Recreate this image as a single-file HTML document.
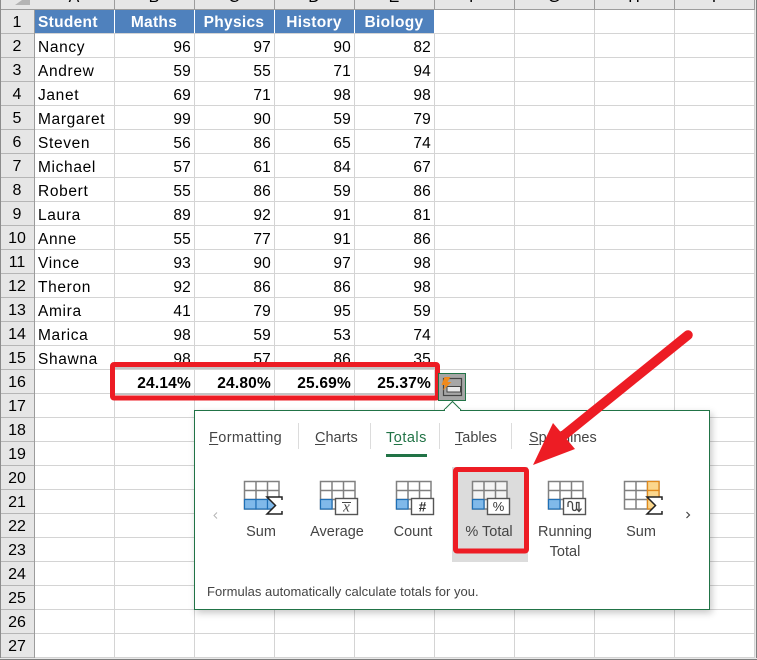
<!DOCTYPE html>
<html><head><meta charset="utf-8"><style>
html,body{margin:0;padding:0;background:#fff}
#p{position:relative;width:757px;height:660px;overflow:hidden;background:#fff;font-family:"Liberation Sans",sans-serif;color:#000}
#bg{position:absolute;left:35px;top:10px;width:720px;height:648px;
background-image:repeating-linear-gradient(to right,transparent 0,transparent 79px,#d4d4d4 79px,#d4d4d4 80px),repeating-linear-gradient(to bottom,transparent 0,transparent 23px,#d4d4d4 23px,#d4d4d4 24px)}
#g{position:absolute;left:35px;top:10px;display:grid;grid-template-columns:repeat(5,80px);grid-auto-rows:24px;font-size:15.5px;line-height:27px;letter-spacing:.2px}
#g div{padding:0 4px 0 3px;white-space:nowrap;box-sizing:border-box;text-align:right;height:24px}
#g .l{text-align:left;letter-spacing:.65px}
#g .h{background:#4f81bd;color:#fff;font-weight:bold;text-align:center;height:23px;line-height:26px;border-right:1px solid #fff;width:80px;letter-spacing:.3px}
#g .h.l{text-align:left}
#g .b{font-weight:bold}
#rh{position:absolute;left:0;top:10px;width:34px;height:648px;background:#e6e6e6;background-image:repeating-linear-gradient(to bottom,transparent 0,transparent 23px,#b5b5b5 23px,#b5b5b5 24px);border-right:1px solid #9c9c9c;font-size:16px;line-height:26px;text-align:center}
#rh div{height:24px}
#ch{position:absolute;left:0;top:0;width:757px;height:9px;background:#e6e6e6;overflow:hidden;font-size:16px}
#ch span{position:absolute;top:-11px;width:80px;text-align:center;line-height:18px;border-right:1px solid #9c9c9c;height:22px}
#line1{position:absolute;left:0;top:9px;width:757px;height:1px;background:#9c9c9c}
#lb{position:absolute;left:0;top:0;width:1px;height:660px;background:#8c8c8c}
#rb{position:absolute;left:755px;top:0;width:2px;height:660px;background:linear-gradient(to right,#e8e8e8 50%,#7f7f7f 50%)}
#bb{position:absolute;left:0;top:658px;width:757px;height:2px;background:linear-gradient(to bottom,#e8e8e8 50%,#7f7f7f 50%)}
#pop{position:absolute;left:194px;top:410px;width:514px;height:198px;background:#fff;border:1px solid #217346;box-shadow:2px 3px 7px rgba(0,0,0,.22)}
.t{position:absolute;top:429px;font-size:14.5px;line-height:18px;color:#444;white-space:nowrap}
.t u{text-underline-offset:2px}
.lab{position:absolute;width:76px;text-align:center;font-size:14.5px;line-height:20px;color:#444}
#foot{position:absolute;left:207px;top:584px;font-size:13px;line-height:16px;color:#444;white-space:nowrap;letter-spacing:.03px}
svg{position:absolute;left:0;top:0}
</style></head><body><div id="p">
<div id="bg"></div>
<div id="ch"><span style="left:34px">A</span><span style="left:114px">B</span><span style="left:194px">C</span><span style="left:274px">D</span><span style="left:354px">E</span><span style="left:434px">F</span><span style="left:514px">G</span><span style="left:594px">H</span><span style="left:674px">I</span></div>
<div id="line1"></div>
<div id="rh"><div>1</div><div>2</div><div>3</div><div>4</div><div>5</div><div>6</div><div>7</div><div>8</div><div>9</div><div>10</div><div>11</div><div>12</div><div>13</div><div>14</div><div>15</div><div>16</div><div>17</div><div>18</div><div>19</div><div>20</div><div>21</div><div>22</div><div>23</div><div>24</div><div>25</div><div>26</div><div>27</div></div>
<div id="g">
<div class="h l">Student</div><div class="h">Maths</div><div class="h">Physics</div><div class="h">History</div><div class="h">Biology</div>
<div class="l">Nancy</div><div>96</div><div>97</div><div>90</div><div>82</div>
<div class="l">Andrew</div><div>59</div><div>55</div><div>71</div><div>94</div>
<div class="l">Janet</div><div>69</div><div>71</div><div>98</div><div>98</div>
<div class="l">Margaret</div><div>99</div><div>90</div><div>59</div><div>79</div>
<div class="l">Steven</div><div>56</div><div>86</div><div>65</div><div>74</div>
<div class="l">Michael</div><div>57</div><div>61</div><div>84</div><div>67</div>
<div class="l">Robert</div><div>55</div><div>86</div><div>59</div><div>86</div>
<div class="l">Laura</div><div>89</div><div>92</div><div>91</div><div>81</div>
<div class="l">Anne</div><div>55</div><div>77</div><div>91</div><div>86</div>
<div class="l">Vince</div><div>93</div><div>90</div><div>97</div><div>98</div>
<div class="l">Theron</div><div>92</div><div>86</div><div>86</div><div>98</div>
<div class="l">Amira</div><div>41</div><div>79</div><div>95</div><div>59</div>
<div class="l">Marica</div><div>98</div><div>59</div><div>53</div><div>74</div>
<div class="l">Shawna</div><div>98</div><div>57</div><div>86</div><div>35</div>
<div></div><div class="b">24.14%</div><div class="b">24.80%</div><div class="b">25.69%</div><div class="b">25.37%</div>
</div>
<div id="lb"></div><div id="rb"></div><div id="bb"></div>
<div id="pop"></div>
<div style="position:absolute;left:452px;top:467px;width:76px;height:95px;background:#dcdcdc"></div>
<div class="t" style="left:209px;letter-spacing:.38px"><u>F</u>ormatting</div>
<div class="t" style="left:315px"><u>C</u>harts</div>
<div class="t" style="left:386px;color:#217346;letter-spacing:.5px">T<u>o</u>tals</div>
<div class="t" style="left:455px"><u>T</u>ables</div>
<div class="t" style="left:529px"><u>S</u>parklines</div>
<div class="lab" style="left:223px;top:522px">Sum</div>
<div class="lab" style="left:299px;top:522px">Average</div>
<div class="lab" style="left:375px;top:522px">Count</div>
<div class="lab" style="left:451px;top:522px">% Total</div>
<div class="lab" style="left:527px;top:522px">Running<br>Total</div>
<div class="lab" style="left:603px;top:522px">Sum</div>
<div id="foot">Formulas automatically calculate totals for you.</div>
<svg width="757" height="660" viewBox="0 0 757 660">
<polygon points="15,5 30,5 30,0 22,0" fill="#b4b4b4"/>
<rect x="114" y="368" width="322" height="26" fill="none" stroke="#c4c4c4" stroke-width="2"/>
<rect x="112.500" y="364.500" width="325" height="33.500" rx="1.500" fill="none" stroke="#ed1c24" stroke-width="5"/>
<rect x="438.500" y="373.500" width="27" height="27" fill="#a6a6a6" stroke="#217346"/>
<rect x="443.500" y="378.500" width="18" height="17" fill="none" stroke="#444" stroke-width="1.200"/>
<rect x="447" y="386.500" width="13.500" height="5.500" fill="#e8e8e8" stroke="#444"/>
<polygon points="450.500,377 444.500,377 441.500,385 445,385 443,390.500 451.500,382 447.500,382" fill="#f08a1d"/>
<path d="M444 410L452.500 401.500L461 410" fill="#fff" stroke="#217346"/>
<rect x="445" y="409" width="15" height="2" fill="#fff"/>
<path d="M298.500 423V449M370.500 423V449M439.500 423V449M511.500 423V449" stroke="#dcdcdc"/>
<rect x="386" y="454" width="41" height="3" fill="#217346"/>
<path d="M217 512.500L214 515.500L217 518.500" fill="none" stroke="#b5b5b5"/>
<path d="M686.500 512L689.500 515L686.500 518" fill="none" stroke="#444" stroke-width="1.200"/>

<g fill="#fff" stroke="#808080" stroke-width="1.500">
<path d="M244.500 481.500H279V509H244.500ZM256 481.500V509M267.500 481.500V509M244.500 490.500H279M244.500 499.500H279"/>
<path d="M320.500 481.500H355V509H320.500ZM332 481.500V509M343.500 481.500V509M320.500 490.500H355M320.500 499.500H355"/>
<path d="M396.500 481.500H431V509H396.500ZM408 481.500V509M419.500 481.500V509M396.500 490.500H431M396.500 499.500H431"/>
<path d="M472.500 481.500H507V509H472.500ZM484 481.500V509M495.500 481.500V509M472.500 490.500H507M472.500 499.500H507" fill="#f4f4f4"/>
<path d="M548.500 481.500H583V509H548.500ZM560 481.500V509M571.500 481.500V509M548.500 490.500H583M548.500 499.500H583"/>
<path d="M624.500 481.500H659V509H624.500ZM636 481.500V509M647.500 481.500V509M624.500 490.500H659M624.500 499.500H659"/>
</g>
<g fill="#80b9ea" stroke="#1f6fb5" stroke-width="1.200">
<rect x="244.500" y="499.500" width="11.500" height="9.500"/><rect x="256" y="499.500" width="11.500" height="9.500"/><rect x="267.500" y="499.500" width="11.500" height="9.500"/>
<rect x="320.500" y="499.500" width="11.500" height="9.500"/>
<rect x="396.500" y="499.500" width="11.500" height="9.500"/>
<rect x="472.500" y="499.500" width="11.500" height="9.500"/>
<rect x="548.500" y="499.500" width="11.500" height="9.500"/>
</g>
<g fill="#fbd78d" stroke="#e08a1e" stroke-width="1.300"><rect x="647.500" y="481.500" width="11.500" height="9"/><rect x="647.500" y="490.500" width="11.500" height="9"/><rect x="647.500" y="499.500" width="11.500" height="9.500"/></g>
<polygon points="267,497 283,497 283,515 267,515 275.500,505.500" fill="#fff"/>
<polygon points="647,497 663,497 663,515 647,515 655.500,505.500" fill="#fff"/>
<path d="M282 500V497H267L275.500 505.500L267 514H282V511" fill="none" stroke="#222" stroke-width="1.500"/>
<path d="M662 500V497H647L655.500 505.500L647 514H662V511" fill="none" stroke="#222" stroke-width="1.500"/>
<g fill="#fff" stroke="#555" stroke-width="1.400">
<rect x="335.500" y="498.500" width="22" height="16"/><rect x="411.500" y="498.500" width="22" height="16"/><rect x="487.500" y="498.500" width="22" height="16"/><rect x="563.500" y="498.500" width="22" height="16"/>
</g>
<text x="346.500" y="511.500" text-anchor="middle" font-family="Liberation Serif,serif" font-style="italic" font-size="15" fill="#444">x</text>
<path d="M342 502.500H351" stroke="#444"/>
<text x="422.500" y="511.500" text-anchor="middle" font-family="Liberation Sans,sans-serif" font-weight="bold" font-size="13.500" fill="#333">#</text>
<text x="498.500" y="511" text-anchor="middle" font-family="Liberation Sans,sans-serif" font-size="13" fill="#333">%</text>
<path d="M568 507V504Q568 501.500 570 501.500T572.500 504V508Q572.500 510.500 574.500 510.500T576.500 508V502.500H579V510.500M576.500 508.500L579 511.500L581.500 508.500" fill="none" stroke="#444" stroke-width="1.300"/>
<rect x="455.500" y="469.500" width="71" height="81.500" rx="1.500" fill="none" stroke="#ed1c24" stroke-width="5"/>
<path d="M688 335L563 436" stroke="#ed1c24" stroke-width="9.500" stroke-linecap="round"/>
<polygon points="533,465 553,423 575,449" fill="#ed1c24"/>
</svg>
</div></body></html>
